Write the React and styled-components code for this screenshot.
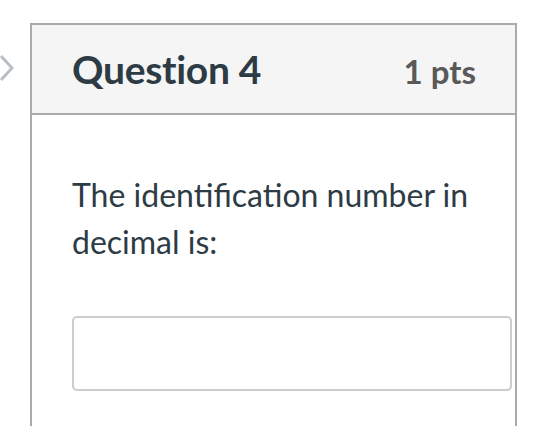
import React from "react";
import styled, { createGlobalStyle } from "styled-components";

const GlobalStyle = createGlobalStyle`
  html, body {
    margin: 0;
    padding: 0;
    background: #fff;
    overflow: hidden;
  }
  body {
    font-family: Lato, "Open Sans", sans-serif;
  }
`;

const Page = styled.div`
  display: flex;
  align-items: flex-start;
  padding-top: 23px;
  width: 548px;
  height: 403px;
`;

const Toggle = styled.div`
  width: 36px;
  height: 90px;
  display: flex;
  align-items: center;
  margin-left: -6px;
  flex-shrink: 0;
  svg {
    display: block;
  }
`;

const Card = styled.div`
  width: 483px;
  height: 420px;
  border: 2px solid #aaaaaa;
  border-bottom: none;
  flex-shrink: 0;
`;

const Header = styled.div`
  display: flex;
  justify-content: space-between;
  align-items: center;
  height: 88px;
  padding: 0 39px 0 40px;
  background: #f5f5f5;
  border-bottom: 2px solid #aaaaaa;
`;

const Title = styled.h2`
  margin: 0;
  font-size: 39px;
  font-weight: 700;
  color: #2d3b45;
  letter-spacing: -0.3px;
`;

const Points = styled.span`
  font-size: 33px;
  font-weight: 700;
  color: #595959;
  margin-top: 4px;
`;

const Body = styled.div`
  padding: 56px 4px 0 40px;
`;

const Text = styled.p`
  margin: 0;
  font-size: 32px;
  line-height: 47px;
  color: #2d3b45;
`;

const Answer = styled.input`
  display: block;
  box-sizing: border-box;
  margin-top: 51px;
  width: 440px;
  height: 75px;
  border: 2px solid #cccccc;
  border-radius: 5px;
  background: #fff;
  outline: none;
`;

export default function App() {
  return (
    <>
      <GlobalStyle />
      <Page>
        <Toggle>
          <svg width="20" height="32" viewBox="0 0 20 32">
            <path
              d="M7 4 L18 16 L7 28"
              fill="none"
              stroke="#b8c0c6"
              strokeWidth="3"
              strokeLinejoin="round"
            />
          </svg>
        </Toggle>
        <Card>
          <Header>
            <Title>Question 4</Title>
            <Points>1 pts</Points>
          </Header>
          <Body>
            <Text>The identification number in decimal is:</Text>
            <Answer type="text" />
          </Body>
        </Card>
      </Page>
    </>
  );
}
